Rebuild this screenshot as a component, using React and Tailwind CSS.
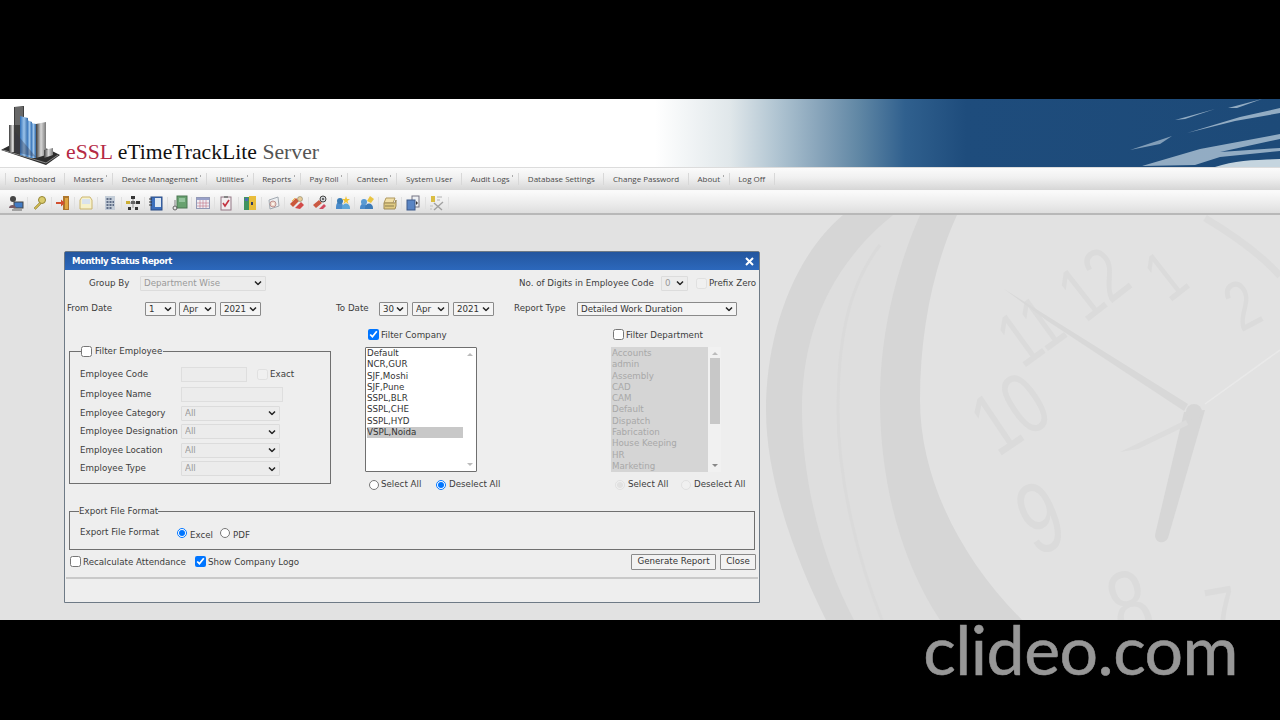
const menu = [
  ["Dashboard", false], ["Masters", true], ["Device Management", true], ["Utilities", true],
  ["Reports", true], ["Pay Roll", true], ["Canteen", true], ["System User", false],
  ["Audit Logs", true], ["Database Settings", false], ["Change Password", false],
  ["About", true], ["Log Off", false],
];

const companies = ["Default", "NCR,GUR", "SJF,Moshi", "SJF,Pune", "SSPL,BLR", "SSPL,CHE", "SSPL,HYD", "VSPL,Noida"];
const departments = ["Accounts", "admin", "Assembly", "CAD", "CAM", "Default", "Dispatch", "Fabrication", "House Keeping", "HR", "Marketing"];

const toolIcons = [
  <g key="1"><rect x="6" y="7" width="9" height="6" fill="#2f6fc0" stroke="#333" /><circle cx="5" cy="4" r="3" fill="#333" /><path d="M1 13c0-4 7-4 7 0z" fill="#6a4a55" /><path d="M4 15h10" stroke="#555" /></g>,
  <g key="2"><circle cx="11" cy="5" r="3.5" fill="#d8c860" stroke="#8a7a20" /><path d="M8.5 7.5 3 13l1.5 1.5L10 9z" fill="#c8b040" stroke="#8a7a20" strokeWidth=".6" /></g>,
  <g key="3"><rect x="8" y="1" width="6" height="14" fill="#a86a18" /><rect x="10" y="3" width="3" height="11" fill="#e0a030" /><path d="M1 7h5V4.5L10 8l-4 3.5V9H1z" fill="#d0401c" /></g>,
  <g key="4"><path d="M2 5 4 2h8l2 3v9H2z" fill="#f8f2c8" stroke="#c8b060" /><path d="M4 4h8v5H4z" fill="#d8e2ee" /></g>,
  <g key="5"><rect x="3" y="1" width="10" height="14" fill="#c0cad6" /><path d="M4.500 3h2v2h-2zm3 0h2v2h-2zm-3 3h2v2h-2zm3 0h2v2h-2zm3 0h1.500v2H10.500zm-6 3h2v2h-2zm3 0h2v2h-2zm3 0h1.500v2H10.500zm-6 3h2v2h-2zm3 0h2v2h-2z" fill="#50607c" /></g>,
  <g key="6"><path d="M8 3v10M3 8h10" stroke="#888" /><rect x="6" y="1" width="4" height="3" fill="#222" /><rect x="1" y="6" width="4" height="3" fill="#c8a820" /><rect x="11" y="6" width="4" height="3" fill="#222" /><rect x="6" y="6" width="4" height="3" fill="#555" /><rect x="3" y="12" width="3" height="3" fill="#222" /><rect x="10" y="12" width="3" height="3" fill="#222" /></g>,
  <g key="7"><rect x="3" y="2" width="11" height="13" fill="#2a62b8" stroke="#173a78" /><rect x="7" y="3" width="6" height="9" fill="#dde8f4" /><path d="M1 4h3M1 7h3M1 10h3" stroke="#222" /></g>,
  <g key="8"><rect x="5" y="1" width="10" height="12" fill="#5a9a62" stroke="#3a6a42" /><path d="M7 3h6v4H7z" fill="#8cc096" /><circle cx="3" cy="13" r="2" fill="none" stroke="#555" /><path d="M3 5v6" stroke="#777" /></g>,
  <g key="9"><rect x="1.500" y="2.500" width="13" height="11" fill="#eef0f6" stroke="#8890b0" /><path d="M2 3h12v2H2z" fill="#8f98c4" /><path d="M5 5v8M8 5v8M11 5v8M2 8h12M2 11h12" stroke="#b04a60" strokeWidth=".5" /></g>,
  <g key="10"><rect x="3" y="2" width="10" height="13" fill="#f2eef0" stroke="#8a6a7a" /><rect x="6" y="1" width="4" height="2" fill="#777" /><path d="m5 8 2 3 4-6" fill="none" stroke="#c02030" strokeWidth="1.600" /></g>,
  <g key="11"><rect x="2" y="2" width="6" height="13" fill="#2e8a50" /><rect x="7" y="1" width="7" height="14" fill="#e8b828" /><rect x="9" y="7" width="2" height="3" fill="#1a2a5a" /><rect x="3" y="3" width="3" height="3" fill="#3a62a8" /></g>,
  <g key="12"><path d="M4 5 13 2l1 9-9 3z" fill="#eceff2" stroke="#9aa2aa" /><circle cx="8" cy="9" r="3" fill="#f0d8c8" stroke="#b88" /><circle cx="8" cy="9" r="1" fill="#fff" /></g>,
  <g key="13"><path d="M1 9 7 3l3 3-6 6z" fill="#c84a28" /><path d="M6 13l6-6 3 3-4 4z" fill="#d03a38" /><circle cx="11" cy="4" r="2.500" fill="#e8c890" stroke="#664" strokeWidth=".5" /><path d="M3 6l3-3" stroke="#edc040" /></g>,
  <g key="14"><path d="M1 10 7 5l3 3-6 5z" fill="#c84a30" /><path d="M7 14l5-5 2 2-3 3z" fill="#d03a50" /><circle cx="11" cy="4" r="3" fill="#cfd2d6" stroke="#333" /><circle cx="11" cy="4" r="1" fill="#333" /></g>,
  <g key="15"><path d="M1 12c0-7 7-7 7 0v2H1z" fill="#3a82c8" /><circle cx="5" cy="6" r="3" fill="#2870b0" /><path d="M7 13c0-6 8-6 8 0v1H7z" fill="#50a0d8" /><path d="m11 1 1 3h3l-2.500 2 1 3-2.500-2-2.500 2 1-3L7 4h3z" fill="#f0c020" /></g>,
  <g key="16"><path d="M1 13c0-6 7-6 7 0v1H1z" fill="#3a82c8" /><circle cx="5" cy="7" r="3" fill="#4a92d0" /><path d="M6 13c0-6 8-6 8 0v1H6z" fill="#2a70b4" /><path d="M8 6 11 1l4 3-3 4z" fill="#e8c030" /></g>,
  <g key="17"><path d="m4 3 9 0-2 5H2z" fill="#f2dea0" stroke="#a89050" /><path d="M2 8h11l1-3v6l-1 3H2z" fill="#e0c878" stroke="#968048" /><path d="M3 11h9" stroke="#807040" /></g>,
  <g key="18"><rect x="7" y="1" width="7" height="11" fill="#eef0f4" stroke="#667" /><rect x="2" y="5" width="8" height="10" fill="#4a7ac0" stroke="#2a4a80" /><path d="M11 6l2 2-2 2z" fill="#222" /></g>,
  <g key="19"><rect x="2" y="1" width="4" height="6" fill="#d8b830" /><path d="M8 2h5M8 5h3" stroke="#aaa" /><path d="m5 15 9-8M5 8l8 7" stroke="#9a9a9a" strokeWidth="1.400" /><path d="M1 11h3M1 14h2" stroke="#bbb" /></g>,
];

function Chevron() {
  return (
    <svg width="8" height="5" viewBox="0 0 8 5" fill="none" stroke="#222" strokeWidth="1.500" className="pointer-events-none absolute right-[4px] top-1/2 -translate-y-1/2">
      <path d="m1 1 3 3 3-3" />
    </svg>
  );
}

function Field({ value, className = "" }) {
  return (
    <div className={"relative shrink-0 " + className}>
      <select disabled defaultValue={value} className="h-[15px] w-full appearance-none rounded-[1px] border border-[#dcdcdc] bg-[#ececec] pl-[3px] text-[#999] opacity-100">
        <option>{value}</option>
      </select>
      <Chevron />
    </div>
  );
}

function DateSelect({ value, className = "" }) {
  return (
    <div className={"relative shrink-0 " + className}>
      <select defaultValue={value} className="block h-[14px] w-full appearance-none rounded-[1px] border border-[#8a8a8a] bg-[#f4f4f4] pl-[3px] text-[#333]">
        <option>{value}</option>
      </select>
      <Chevron />
    </div>
  );
}

function EmployeeRow({ label }) {
  return (
    <div className="flex h-[18.5px] items-center">
      <span className="w-[101px] shrink-0 whitespace-nowrap">{label}</span>
      <Field value="All" className="w-[99px]" />
    </div>
  );
}

function Logo() {
  return (
    <svg width="64" height="66" viewBox="0 0 64 66" className="shrink-0">
      <defs>
        <linearGradient id="steel" x1="0" x2="1"><stop offset="0" stopColor="#3a3a3a" /><stop offset=".5" stopColor="#d8d8d8" /><stop offset="1" stopColor="#7a7a7a" /></linearGradient>
        <linearGradient id="blue" x1="0" x2="1"><stop offset="0" stopColor="#2f6fb8" /><stop offset=".5" stopColor="#9cc4ea" /><stop offset="1" stopColor="#2f68a8" /></linearGradient>
      </defs>
      <path d="M1 50 46 65l14-10-12-6-30-8z" fill="#2c2c2c" />
      <path d="M3 50 46 63l12-8" stroke="#8a8a8a" fill="none" />
      <rect x="9" y="25" width="7" height="27" fill="url(#steel)" />
      <path d="M14 7 24 6v50l-10-4z" fill="#3e3e3e" />
      <path d="M15 7h8v18h-8z" fill="#686868" />
      <path d="M36 24 46 22v33l-10 3z" fill="url(#steel)" />
      <path d="M44 50 53 48v7l-9 3z" fill="url(#steel)" />
      <path d="M20 16l8 2v39l-8-2z" fill="url(#blue)" />
      <path d="M27 20l5 2v36l-5-1z" fill="url(#blue)" />
      <path d="M31 23l5 1v34l-5 0z" fill="url(#blue)" />
      <path d="M15 32 36 57l-21-5z" fill="#33334455" />
    </svg>
  );
}

function Numeral({ x, y, size, angle, squeeze = 0.72, children }) {
  return (
    <text textAnchor="middle" dominantBaseline="central" fontSize={size} transform={`translate(${x} ${y}) rotate(${angle}) scale(${squeeze} 1)`}>
      {children}
    </text>
  );
}

function ClockBackground() {
  return (
    <svg className="absolute left-0 top-0" width="1280" height="405" viewBox="0 215 1280 405" fontFamily="'Liberation Sans', sans-serif" fill="#dbdbdb">
      <path d="M843 215C790 260 766 340 766 410c0 70 30 150 60 210h196c-60-60-102-140-102-220 0-70 14-135 37-185z" fill="#d6d6d6" />
      <path d="M893 215C825 270 802 340 802 410c0 70 20 150 52 210h86c-40-60-60-140-60-220 0-70 18-135 40-185z" fill="#dedede" />
      <path d="M880 245C845 290 838 350 838 410c0 70 20 150 44 210" fill="none" stroke="#dadada" strokeWidth="3" />
      <path d="M1205 218c25 15 55 35 75 58" fill="none" stroke="#dcdcdc" strokeWidth="7" />
      <Numeral x={1093} y={283} size={78} angle={-38}>12</Numeral>
      <Numeral x={1165} y={275} size={72} angle={-38}>1</Numeral>
      <Numeral x={1242} y={305} size={70} angle={-28}>2</Numeral>
      <Numeral x={1030} y={330} size={78} angle={-36}>11</Numeral>
      <Numeral x={1010} y={413} size={88} angle={-34}>10</Numeral>
      <Numeral x={1040} y={517} size={100} angle={-22}>9</Numeral>
      <Numeral x={1130} y={605} size={100} angle={-18}>8</Numeral>
      <Numeral x={1222} y={615} size={80} angle={-10}>7</Numeral>
      <path d="M1004 289 1188 404l-4 7L1046 320z" fill="#d8d8d8" />
      <path d="M1184 412 1205 410 1168 538c-4 7-13 5-13-3z" fill="#d6d6d6" />
      <path d="M1120 452 1186 420l2 5-50 24z" fill="#dcdcdc" />
      <path d="M1205 404 1280 350" stroke="#e9e9e9" strokeWidth="1.500" />
      <circle cx="1194" cy="412" r="8" fill="#d6d6d6" />
    </svg>
  );
}

export default function App() {
  return (
    <div className="w-[1280px] h-[720px] overflow-hidden bg-black font-['DejaVu_Sans',sans-serif]">
      <div className="h-[99px]" />

      {/* banner */}
      <div className="relative flex h-[68px] items-start overflow-hidden bg-[linear-gradient(to_right,#ffffff_0,#ffffff_655px,#e0e7ea_730px,#adc2d0_780px,#7d9cb4_830px,#5f86a4_860px,#30608e_905px,#1e4c7c_966px,#1d4a78_1280px)] pt-[1px]">
        <Logo />
        <div className="ml-[2px] mt-[39px] whitespace-nowrap font-['Liberation_Serif',serif] text-[21.7px] leading-[26px]">
          <span className="text-[#b52a45]">eSSL</span> <span className="text-[#111]">eTimeTrackLite</span> <span className="text-[#555]">Server</span>
        </div>
        <svg className="absolute left-0 top-0 blur-[0.7px]" width="1280" height="68" fill="#c4d6e2">
          <path d="M1175 21 1215 10l-30 10z" opacity=".7" />
          <path d="M1228 9 1262 0l-25 9z" opacity=".7" />
          <path d="M1187 34 1240 18l40-9v5l-45 8z" opacity=".7" />
          <path d="M1130 51 1172 37l-12 8z" opacity=".6" />
          <path d="M1142 67 1200 50l80-15v5l-60 13 60-4v3l-60 6-25 8z" opacity=".7" />
          <path d="M1215 68c20-7 40-7 65-8v8z" fill="#d8e4ea" opacity=".9" />
        </svg>
      </div>

      {/* menu */}
      <div className="flex h-[23px] items-center border-t border-[#dcdcdc] bg-[linear-gradient(to_bottom,#fbfbfb,#f0f0f0_45%,#d6d6d6)] pl-[4.5px] pb-[1px] font-['Open_Sans',sans-serif] text-[8px] text-[#4a4a4a]">
        {menu.map(([name, arrow]) => (
          <div key={name} className="relative flex h-[12px] items-center whitespace-nowrap border-l border-[#d8d8d8] px-[8.6px]">
            {name}
            {arrow && <span className="absolute right-[5px] top-[2px] h-[2px] w-[1px] bg-[#aaa]" />}
          </div>
        ))}
        <div className="h-[12px] border-l border-[#d8d8d8]" />
      </div>

      {/* toolbar */}
      <div className="flex h-[25px] items-center border-t-[2px] border-b-[2px] border-t-[#fafafa] border-b-[#b8b8b8] bg-[linear-gradient(to_bottom,#fafafa,#ededed_50%,#dedede)] pl-[8px]">
        {toolIcons.map((icon) => (
          <div key={icon.key} className="flex shrink-0 items-center">
            <svg width="16" height="16" viewBox="0 0 16 16" className="opacity-90">{icon}</svg>
            <span className="mx-[3.2px] h-[12px] w-[1px] bg-[#e0e0e0]" />
          </div>
        ))}
      </div>

      {/* content */}
      <div className="relative h-[405px] bg-[#e2e2e2] pl-[64px] pt-[36px] text-[8.7px] text-[#3c3c3c]">
        <ClockBackground />
        <div className="relative flex h-[352px] w-[696px] flex-col rounded-t-[2px] border border-[#6e7a86] bg-[#eeeeee]">
          <div className="flex h-[18px] items-center justify-between bg-[linear-gradient(to_bottom,#24569e,#2c68bc)] pl-[7px] pr-[5px] text-white">
            <span className="text-[8.5px] font-bold tracking-[-0.41px]">Monthly Status Report</span>
            <svg width="9" height="9" viewBox="0 0 9 9" stroke="#fff" strokeWidth="2"><path d="m1 1 7 7M8 1 1 8" /></svg>
          </div>

          <div className="mt-[5px] flex h-[16px] items-center whitespace-nowrap">
            <span className="ml-[24px] mt-[1px] w-[51px]">Group By</span>
            <Field value="Department Wise" className="w-[126px]" />
            <span className="ml-[253px] mt-[2px] w-[137px]">No. of Digits in Employee Code</span>
            <Field value="0" className="ml-[5px] w-[27px]" />
            <input type="checkbox" disabled className="ml-[8px] h-[11px] w-[11px] opacity-40" />
            <span className="ml-[2px] mt-[2px]">Prefix Zero</span>
          </div>

          <div className="mt-[10px] flex h-[15px] items-center whitespace-nowrap">
            <span className="ml-[2px] w-[78px]">From Date</span>
            <DateSelect value="1" className="w-[31px]" />
            <DateSelect value="Apr" className="ml-[3px] w-[37px]" />
            <DateSelect value="2021" className="ml-[4px] w-[41px]" />
            <span className="ml-[75px] w-[43px]">To Date</span>
            <DateSelect value="30" className="w-[29px]" />
            <DateSelect value="Apr" className="ml-[4px] w-[37px]" />
            <DateSelect value="2021" className="ml-[4px] w-[41px]" />
            <span className="ml-[20px] w-[63px]">Report Type</span>
            <DateSelect value="Detailed Work Duration" className="w-[160px]" />
          </div>

          <div className="mt-[13px] flex whitespace-nowrap">
            <fieldset className="ml-[4px] mt-[16px] h-[139px] w-[262px] border border-[#6f6f6f] pl-[10px] pt-[6px]">
              <legend className="ml-[1px] flex items-center pr-[1px]">
                <input type="checkbox" className="h-[11px] w-[11px]" />
                <span className="ml-[3px]">Filter Employee</span>
              </legend>
              <div className="flex h-[20px] items-center">
                <span className="w-[101px] shrink-0">Employee Code</span>
                <input disabled className="h-[15px] w-[66px] border border-[#dedede] bg-[#ececec]" />
                <input type="checkbox" disabled className="ml-[10px] h-[11px] w-[11px] opacity-40" />
                <span className="ml-[2px]">Exact</span>
              </div>
              <div className="flex h-[20px] items-center">
                <span className="w-[101px] shrink-0">Employee Name</span>
                <input disabled className="h-[15px] w-[102px] border border-[#dedede] bg-[#ececec]" />
              </div>
              <EmployeeRow label="Employee Category" />
              <EmployeeRow label="Employee Designation" />
              <EmployeeRow label="Employee Location" />
              <EmployeeRow label="Employee Type" />
            </fieldset>

            <div className="ml-[34px] w-[140px]">
              <div className="flex h-[12px] items-center pl-[3px]">
                <input type="checkbox" defaultChecked className="-mt-[1px] h-[11px] w-[11px]" />
                <span className="ml-[2px] mt-[2px]">Filter Company</span>
              </div>
              <div className="mt-[6px] flex h-[125px] w-[112px] rounded-[1px] border border-[#6f6f6f] bg-white pl-[1px] text-[#333]">
                <div className="flex-1 leading-[11.3px]">
                  {companies.map((c) => (
                    <div key={c} className={c === "VSPL,Noida" ? "bg-[#c8c8c8]" : ""}>{c}</div>
                  ))}
                </div>
                <div className="flex w-[13px] flex-col items-center justify-between py-[5px]">
                  <span className="h-0 w-0 border-x-[3px] border-b-[3px] border-x-transparent border-b-[#bbb]" />
                  <span className="h-0 w-0 border-x-[3px] border-t-[3px] border-x-transparent border-t-[#bbb]" />
                </div>
              </div>
              <div className="mt-[7px] flex h-[12px] items-center pl-[4px]">
                <input type="radio" name="comp" className="-mt-[1px] h-[10px] w-[10px]" />
                <span className="ml-[2px] w-[55px]">Select All</span>
                <input type="radio" name="comp" defaultChecked className="-mt-[1px] h-[10px] w-[10px]" />
                <span className="ml-[3px]">Deselect All</span>
              </div>
            </div>

            <div className="ml-[106px] w-[140px]">
              <div className="flex h-[12px] items-center pl-[2px]">
                <input type="checkbox" className="-mt-[1px] h-[11px] w-[11px]" />
                <span className="ml-[2px] mt-[2px]">Filter Department</span>
              </div>
              <div className="mt-[6px] flex h-[125px] w-[110px] bg-[#f1f1f1] text-[#a8a8a8]">
                <div className="flex-1 overflow-hidden bg-[#d5d5d5] pl-[1px] pt-[1px] leading-[11.3px]">
                  {departments.map((d) => <div key={d}>{d}</div>)}
                </div>
                <div className="flex w-[13px] flex-col items-center py-[5px]">
                  <span className="h-0 w-0 border-x-[3px] border-b-[3px] border-x-transparent border-b-[#bbb]" />
                  <span className="mt-[3px] h-[66px] w-[10px] bg-[#c8c8c8]" />
                  <span className="mt-auto h-0 w-0 border-x-[3px] border-t-[3px] border-x-transparent border-t-[#888]" />
                </div>
              </div>
              <div className="mt-[7px] flex h-[12px] items-center pl-[4px]">
                <input type="radio" name="dept" disabled defaultChecked className="-mt-[1px] h-[10px] w-[10px] opacity-40" />
                <span className="ml-[3px] w-[53px]">Select All</span>
                <input type="radio" name="dept" disabled className="-mt-[1px] h-[10px] w-[10px] opacity-40" />
                <span className="ml-[3px]">Deselect All</span>
              </div>
            </div>
          </div>

          <fieldset className="ml-[4px] mt-[14px] h-[45px] w-[686px] whitespace-nowrap border border-[#6f6f6f] pl-[10px]">
            <legend className="-ml-[1px] px-[0px] leading-[12px]">Export File Format</legend>
            <div className="mt-[7px] flex h-[18px] items-center">
              <span className="w-[97px]">Export File Format</span>
              <input type="radio" name="fmt" defaultChecked className="-mt-[1px] h-[10px] w-[10px]" />
              <span className="ml-[3px] mt-[6px] w-[30px]">Excel</span>
              <input type="radio" name="fmt" className="-mt-[1px] h-[10px] w-[10px]" />
              <span className="ml-[3px] mt-[6px]">PDF</span>
            </div>
          </fieldset>

          <div className="mt-[3px] flex h-[17px] items-center whitespace-nowrap pl-[5px] pr-[3px]">
            <input type="checkbox" className="h-[11px] w-[11px]" />
            <span className="ml-[2px] mt-[2px] w-[112px]">Recalculate Attendance</span>
            <input type="checkbox" defaultChecked className="h-[11px] w-[11px]" />
            <span className="ml-[2px] mt-[2px]">Show Company Logo</span>
            <button className="ml-auto h-[16px] w-[85px] rounded-[1px] border border-[#8a8a8a] bg-[#f2f2f2] text-[#333]">Generate Report</button>
            <button className="ml-[4px] h-[16px] w-[36px] rounded-[1px] border border-[#8a8a8a] bg-[#f2f2f2] text-[#333]">Close</button>
          </div>

          <div className="mx-[1px] mt-[7px] h-[2px] bg-[#c9c9c9]" />
        </div>
      </div>

      {/* video watermark */}
      <div className="flex h-[100px] justify-end pr-[42px] pt-[1px]">
        <span className="font-['Lato',sans-serif] text-[68px] leading-[56px] tracking-[-0.5px] text-[#979797] [-webkit-text-stroke:0.6px_#979797]">clideo.com</span>
      </div>
    </div>
  );
}
